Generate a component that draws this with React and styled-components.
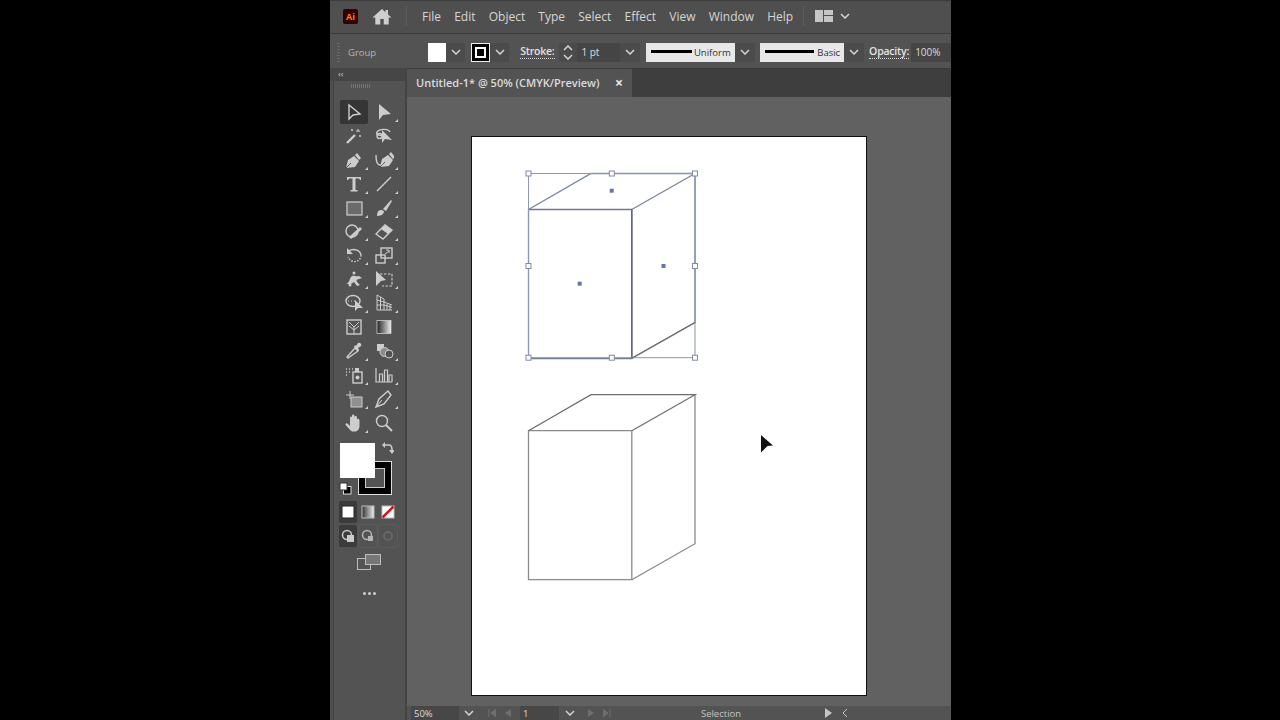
import React from 'react';
import styled, { createGlobalStyle } from 'styled-components';

const GlobalStyle = createGlobalStyle`
  html, body { margin: 0; background: #000; }
  body { font-family: 'Open Sans', 'Liberation Sans', sans-serif; }
  * { box-sizing: border-box; }
`;

const Page = styled.div`
  width: 1280px;
  height: 720px;
  background: #000;
  overflow: hidden;
`;

const Frame = styled.div`
  width: 621px;
  height: 720px;
  margin-left: 330px;
  display: flex;
  flex-direction: column;
  background: #535353;
  overflow: hidden;
`;

const MenuBar = styled.header`
  height: 34px;
  flex: none;
  display: flex;
  align-items: center;
  padding: 0 0 2px 13px;
  background: #4f4f4f;
  border-top: 1px solid #3c3c3c;
  border-bottom: 1px solid #3a3a3a;
`;

const AiLogo = styled.div`
  width: 15px;
  height: 15px;
  border-radius: 2px;
  background: #330000;
  color: #ff7c00;
  font-size: 9px;
  font-weight: 700;
  line-height: 15px;
  text-align: center;
`;

const Home = styled.div`
  margin-left: 14px;
  display: flex;
`;

const VDivider = styled.div`
  width: 1px;
  height: 20px;
  background: #5c5c5c;
  margin: 0 ${({ $right }) => $right}px 0 ${({ $left }) => $left}px;
`;

const MenuList = styled.nav`
  display: flex;
  gap: 13.2px;
`;

const MenuItem = styled.span`
  color: #d6d6d6;
  font-size: 12px;
`;

const Chevron = ({ color = '#d4d4d4' }) => (
  <svg width="10" height="6" viewBox="0 0 10 6">
    <path d="M1 1l4 4 4-4" fill="none" stroke={color} strokeWidth="1.5" />
  </svg>
);

const ControlBar = styled.div`
  height: 34px;
  flex: none;
  display: flex;
  align-items: center;
  background: #535353;
  padding: 2px 0 0 7px;
`;

const Gripper = styled.div`
  width: 3px;
  height: 19px;
  background: repeating-linear-gradient(#6a6a6a 0 1px, transparent 1px 3px);
`;

const Hint = styled.span`
  margin-left: 8px;
  width: 80px;
  color: #b4b4b4;
  font-size: 9.5px;
`;

const FillSwatch = styled.div`
  width: 19px;
  height: 19px;
  background: #fff;
`;

const StrokeSwatch = styled.div`
  width: 19px;
  height: 19px;
  margin-left: 6px;
  background: #000;
  border: 1px solid #eee;
  display: flex;
  align-items: center;
  justify-content: center;
  &::after {
    content: '';
    width: 7px;
    height: 7px;
    border: 2px solid #fff;
  }
`;

const ChevronBox = styled.div`
  width: ${({ $w }) => $w || 20}px;
  height: 19px;
  display: flex;
  align-items: center;
  justify-content: center;
  background: #4b4b4b;
`;

const DottedLabel = styled.span`
  color: #e2e2e2;
  font-size: 10.5px;
  font-weight: 600;
  line-height: 13px;
  letter-spacing: -0.2px;
  border-bottom: 1px dotted #ddd;
  margin-left: ${({ $left }) => $left}px;
`;

const Spinner = styled.div`
  width: 19px;
  height: 19px;
  margin-left: 4px;
  display: flex;
  flex-direction: column;
  align-items: center;
  justify-content: center;
  gap: 3px;
  background: #4b4b4b;
  svg:first-child { transform: scaleY(-1); }
`;

const Field = styled.div`
  width: ${({ $w }) => $w}px;
  height: 19px;
  margin-left: ${({ $left }) => $left || 0}px;
  padding-left: 4px;
  background: #454545;
  color: #dedede;
  font-size: 10px;
  line-height: 18px;
  white-space: nowrap;
  overflow: hidden;
`;

const ProfileBox = styled.div`
  width: ${({ $w }) => $w}px;
  height: 19px;
  margin-left: ${({ $left }) => $left}px;
  padding: 1px 4px 0 5px;
  background: #e8e8e8;
  display: flex;
  align-items: center;
  justify-content: space-between;
  color: #333;
  font-size: 9.5px;
  overflow: hidden;
`;

const ProfileLine = styled.i`
  display: block;
  width: ${({ $w }) => $w}px;
  height: 3px;
  margin-top: -2px;
  background: #000;
`;

const Workspace = styled.div`
  flex: 1;
  min-height: 0;
  display: flex;
`;

const Toolbar = styled.aside`
  width: 77px;
  flex: none;
  display: flex;
  flex-direction: column;
  align-items: flex-start;
  background: #535353;
  border-right: 2px solid #444;
  padding-left: 9px;
  box-shadow: inset 3px 0 0 #4f4f4f, inset 4px 0 0 #434343;
`;

const ToolbarHead = styled.div`
  height: 13px;
  margin: 0 0 0 -9px;
  width: 75px;
  flex: none;
  background: #464646;
  color: #c8c8c8;
  font-size: 9px;
  line-height: 12px;
  padding-left: 8px;
`;

const ToolGrip = styled.div`
  width: 20px;
  height: 4px;
  margin: 3px 0 12px 12px;
  flex: none;
  background: repeating-linear-gradient(90deg, #747474 0 1px, transparent 1px 2px);
`;

const ToolGrid = styled.div`
  display: grid;
  grid-template-columns: 30px 30px;
  grid-auto-rows: 23.92px;
`;

const ToolCell = styled.div`
  position: relative;
  display: flex;
  align-items: center;
  justify-content: center;
  margin: 0 1px;
  border-radius: 2px;
  background: ${({ $active }) => ($active ? '#353535' : 'transparent')};
  ${({ $flag }) =>
    $flag &&
    `&::after {
      content: '';
      position: absolute;
      right: 0;
      bottom: 2px;
      border-left: 3px solid transparent;
      border-bottom: 3px solid #cfcfcf;
    }`}
`;

const Swatches = styled.div`
  position: relative;
  width: 54px;
  height: 52px;
  margin-top: 8px;
  flex: none;
`;

const BigFill = styled.div`
  position: absolute;
  left: 1px;
  top: 0;
  width: 35px;
  height: 35px;
  background: #fff;
  z-index: 1;
`;

const BigStroke = styled.div`
  position: absolute;
  left: 19px;
  top: 18px;
  width: 34px;
  height: 34px;
  background: #000;
  border: 1px solid #ddd;
  display: flex;
  align-items: center;
  justify-content: center;
  &::after {
    content: '';
    width: 18px;
    height: 18px;
    background: #535353;
    border: 1px solid #ccc;
  }
`;

const SwatchIcon = styled.div`
  position: absolute;
  left: ${({ $x }) => $x}px;
  top: ${({ $y }) => $y}px;
  display: flex;
`;

const ModeRow = styled.div`
  display: flex;
  gap: 2px;
  margin-top: ${({ $top }) => $top}px;
  flex: none;
`;

const ModeCell = styled.div`
  width: 18px;
  height: 22px;
  display: flex;
  align-items: center;
  justify-content: center;
  border-radius: 2px;
  background: ${({ $active }) => ($active ? '#3b3b3b' : 'transparent')};
  outline: ${({ $ghost }) => ($ghost ? '1px solid #5b5b5b' : 'none')};
`;

const ScreenMode = styled.div`
  margin: 7px 0 0 18px;
  display: flex;
`;

const MoreDots = styled.div`
  margin: 22px 0 0 24px;
  display: flex;
  gap: 2px;
  i {
    width: 3px;
    height: 3px;
    border-radius: 50%;
    background: #cfcfcf;
  }
`;

const DocArea = styled.main`
  flex: 1;
  min-width: 0;
  display: flex;
  flex-direction: column;
`;

const TabBar = styled.div`
  height: 29px;
  flex: none;
  display: flex;
  background: #3e3e3e;
  border-top: 1px solid #3a3a3a;
`;

const Tab = styled.div`
  width: 225px;
  display: flex;
  align-items: center;
  justify-content: space-between;
  padding: 0 9px 2px;
  background: #535353;
  color: #dcdcdc;
  font-size: 11px;
  font-weight: 600;
`;

const TabClose = styled.span`
  color: #e8e8e8;
  font-size: 14px;
  font-weight: 700;
`;

const Canvas = styled.div`
  flex: 1;
  min-height: 0;
  background: #616161;
  padding: 39px 0 0 64px;
`;

const Artboard = styled.div`
  width: 396px;
  height: 560px;
  background: #fff;
  border: 1px solid #111;
`;

const ArtSvg = styled.svg`
  display: block;
`;

const StatusBar = styled.footer`
  height: 14px;
  flex: none;
  display: flex;
  align-items: flex-start;
  background: #535353;
  padding-left: 4px;
  color: #dcdcdc;
  font-size: 9.5px;
  line-height: 13px;
`;

const StatusField = styled.div`
  width: ${({ $w }) => $w}px;
  height: 14px;
  background: #474747;
  padding: 1px 0 0 3px;
`;

const StatusBox = styled.div`
  width: ${({ $w }) => $w}px;
  height: 14px;
  display: flex;
  align-items: center;
  justify-content: center;
  gap: ${({ $gap }) => $gap || 0}px;
`;

const StatusLabel = styled.div`
  width: 206px;
  padding-top: 1px;
  text-align: center;
  color: #c4c4c4;
`;

const stroke = { fill: 'none', stroke: '#cdcdcd', strokeWidth: 1.4 };
const solid = { fill: '#cdcdcd' };

const Nib = ({ x = 0, y = 0 }) => (
  <g transform={`translate(${x} ${y})`}>
    <path d="M2 18l2-8 6-4 5 5-4 6z" {...solid} />
    <path d="M11 5l2-2 4 5-2 2z" {...solid} />
    <path d="M2 18l5-5" stroke="#535353" strokeWidth="1" />
  </g>
);

const icons = {
  selection: <path d="M5 3v14l4-4 7-1z" {...stroke} />,
  direct: <path d="M5 2v16l4-5 8-1z" {...solid} />,
  wand: (
    <g>
      <path d="M3 17l8-8" stroke="#cdcdcd" strokeWidth="2.4" />
      <path d="M14 3v3M12 5h4M8 3v2M7 4h2M16 9v2M15 10h2" stroke="#cdcdcd" strokeWidth="1" />
    </g>
  ),
  lasso: (
    <g>
      <path d="M9 9c-6 1-7-1-6-3 2-3 11-4 13 0" {...stroke} />
      <circle cx="5.5" cy="10" r="2.5" {...stroke} />
      <path d="M8 4v13l3-4 7 1z" {...solid} />
    </g>
  ),
  pen: <Nib y="0" />,
  curvature: (
    <g>
      <g transform="translate(4 -1)"><Nib /></g>
      <path d="M2 5c0 6 1 10 4 10s3-4 4-5" {...stroke} />
    </g>
  ),
  type: <path d="M3 3h14v3h-1l-1-1.500h-3.500v11.500h2v1.500h-7v-1.500h2v-11.500h-3.500l-1 1.500h-1z" {...solid} />,
  line: <path d="M3 17L17 3" {...stroke} />,
  rect: <rect x="3" y="4" width="15" height="13" fill="#6b6b6b" stroke="#cdcdcd" strokeWidth="1.2" />,
  brush: (
    <g>
      <path d="M9 11L17 2l1 1-6 10z" {...solid} />
      <path d="M3 18c0-3 1-6 4-6 2 0 3 1 3 2-1 3-4 4-7 4z" {...solid} />
    </g>
  ),
  shaper: (
    <g>
      <circle cx="8" cy="10" r="6" {...stroke} />
      <path d="M6 17L17 7" stroke="#cdcdcd" strokeWidth="3" />
    </g>
  ),
  eraser: (
    <g>
      <path d="M2 13l9-9 7 5-9 9z" {...stroke} />
      <path d="M7 8l4-4 7 5-4 4z" {...solid} />
    </g>
  ),
  rotate: (
    <g>
      <path d="M4 7c3-4 12-3 13 3" {...stroke} />
      <path d="M17 10c0 5-5 8-9 6-2-1-3-2-4-4" fill="none" stroke="#cdcdcd" strokeWidth="1.4" strokeDasharray="1.500 1.500" />
      <path d="M3 3v6h6z" {...solid} />
    </g>
  ),
  scale: (
    <g>
      <rect x="2" y="10" width="9" height="8" {...stroke} />
      <rect x="7" y="3" width="11" height="10" {...stroke} />
      <path d="M11 9l4-3M12 5h3v3" stroke="#cdcdcd" strokeWidth="1" fill="none" />
    </g>
  ),
  width: (
    <g>
      <path d="M2 15c4-1 3-6 6-8 2-1 4 1 7 0l3 2-3 1c-2 0-3 1-2 3l3 3-3 1-3-4-3 2z" {...solid} />
      <circle cx="6" cy="16" r="1.500" {...solid} />
      <circle cx="10" cy="4" r="1.500" {...solid} />
    </g>
  ),
  freeTransform: (
    <g>
      <path d="M6 5h12v12H8" fill="none" stroke="#cdcdcd" strokeWidth="1.2" strokeDasharray="2.500 1.500" />
      <path d="M2 2v15l5-5 5-1z" {...solid} />
    </g>
  ),
  shapeBuilder: (
    <g>
      <ellipse cx="9" cy="8" rx="7" ry="5.500" {...stroke} />
      <path d="M4 8h1M7 8h1M10 8h1" stroke="#cdcdcd" strokeWidth="1.200" />
      <path d="M11 7v11l3-3 5 0z" {...solid} />
    </g>
  ),
  perspective: (
    <path
      d="M3 2v15h15M3 2l7 4v11M3 7l7 2M3 12l7 0M6.500 4v13M10 9l8 3M10 12l8 2.500M13 17v-6M16 17v-5"
      fill="none"
      stroke="#cdcdcd"
      strokeWidth="1"
    />
  ),
  mesh: (
    <g>
      <rect x="3" y="3" width="14" height="14" {...stroke} />
      <path d="M10 17V10M10 10L5 5M10 10L15 5M10 13L5 9M10 13L15 9" stroke="#cdcdcd" strokeWidth="1" fill="none" />
    </g>
  ),
  gradient: (
    <g>
      <rect x="3" y="3.500" width="14" height="13" fill="url(#toolGrad)" stroke="#cdcdcd" strokeWidth="0.800" />
    </g>
  ),
  dropper: (
    <g>
      <path d="M4 17l-1-1 8-9 3 3z" {...stroke} />
      <path d="M10 6l2 2 2 2 1-1-1-2 3-2c1-2-1-4-3-3l-2 3-1-1z" {...solid} />
    </g>
  ),
  blend: (
    <g>
      <rect x="3" y="3" width="7" height="7" {...solid} />
      <circle cx="10.500" cy="11" r="4.500" fill="#8b8b8b" stroke="#cdcdcd" />
      <circle cx="15" cy="13" r="4" fill="#535353" stroke="#cdcdcd" />
    </g>
  ),
  symbol: (
    <g>
      <rect x="9" y="7" width="9" height="11" {...stroke} />
      <rect x="11" y="3" width="4" height="4" {...solid} />
      <circle cx="13.500" cy="12.500" r="2" {...solid} />
      <path d="M2 4h1M5 4h1M8 4h1M2 7h1M5 7h1M2 10h1" stroke="#cdcdcd" strokeWidth="1.500" />
    </g>
  ),
  graph: <path d="M2 3v14h16M5.500 17V9h3v8M10.500 17V5h3v12M15 17v-7h3v7" fill="none" stroke="#cdcdcd" strokeWidth="1.200" />,
  artboard: (
    <g>
      <rect x="7" y="8" width="11" height="10" fill="#8f8f8f" stroke="#cdcdcd" />
      <path d="M6 2v8M2 6h8" stroke="#cdcdcd" strokeWidth="1" />
    </g>
  ),
  slice: (
    <g>
      <path d="M2 18l3-8 9-8 3 4-7 9z" {...stroke} />
      <path d="M2 18l6-7" stroke="#cdcdcd" strokeWidth="1" />
    </g>
  ),
  hand: (
    <path
      d="M8 18.500c-2-1-3-3-6-6-1.500-2 .5-3 2-1.500l2 2V5c0-2 2-2 2 0V3c0-2 2.500-2 2.500 0v1.500c0-2 2.500-2 2.500 0V7c0-2 2.500-1.500 2.500 .5v5.500c0 3-2 5.500-4.500 5.500z"
      {...solid}
    />
  ),
  zoom: (
    <g>
      <circle cx="8" cy="8" r="5.500" {...stroke} />
      <path d="M12 12l6 6" stroke="#cdcdcd" strokeWidth="2" />
    </g>
  ),
};

const ToolIcon = ({ name }) => (
  <svg width="20" height="20" viewBox="0 0 20 20">
    {icons[name]}
  </svg>
);

const tools = [
  ['selection', false, true],
  ['direct', true],
  ['wand'],
  ['lasso'],
  ['pen', true],
  ['curvature', true],
  ['type', true],
  ['line', true],
  ['rect', true],
  ['brush', true],
  ['shaper', true],
  ['eraser', true],
  ['rotate', true],
  ['scale', true],
  ['width', true],
  ['freeTransform', true],
  ['shapeBuilder', true],
  ['perspective', true],
  ['mesh'],
  ['gradient'],
  ['dropper', true],
  ['blend', true],
  ['symbol', true],
  ['graph', true],
  ['artboard', true],
  ['slice', true],
  ['hand', true],
  ['zoom'],
];

const menus = ['File', 'Edit', 'Object', 'Type', 'Select', 'Effect', 'View', 'Window', 'Help'];

const Handle = ({ x, y }) => (
  <rect x={x - 2.5} y={y - 2.5} width="5" height="5" fill="#fff" stroke="#7e8aa8" strokeWidth="1" />
);

const Dot = ({ x, y }) => <rect x={x - 2} y={y - 2} width="4" height="4" fill="#6a70b4" />;

const Box = ({ y, line, topLine }) => (
  <g fill="none" stroke={line} strokeWidth="1.300">
    <path d={`M528.500 ${y + 36}H631.800V${y + 185}H528.500Z`} />
    <path d={`M528.500 ${y + 36}L591 ${y}H695L631.800 ${y + 36}`} stroke={topLine} />
    <path d={`M695 ${y}V${y + 149}L631.800 ${y + 185}`} />
  </g>
);

const handles = [
  [528.5, 173.5], [611.8, 173.5], [695, 173.5],
  [528.5, 266], [695, 266],
  [528.5, 357.7], [611.8, 357.7], [695, 357.7],
];

export default function App() {
  return (
    <Page>
      <GlobalStyle />
      <Frame>
        <MenuBar>
          <AiLogo>Ai</AiLogo>
          <Home>
            <svg width="20" height="17" viewBox="0 0 20 17">
              <path d="M10 1L0.500 9.500h2.800V16.500h5V11h3.400v5.500h5V9.500h2.800l-3.500-3.100V2h-2.500v2.200z" fill="#cfcfcf" />
            </svg>
          </Home>
          <VDivider $left={14} $right={15} />
          <MenuList>
            {menus.map((m) => (
              <MenuItem key={m}>{m}</MenuItem>
            ))}
          </MenuList>
          <VDivider $left={10} $right={11} />
          <svg width="18" height="12" viewBox="0 0 18 12">
            <rect x="0" y="0" width="8" height="12" fill="#c6c6c6" />
            <rect x="9" y="0" width="9" height="5" fill="#c6c6c6" />
            <rect x="9" y="6" width="9" height="6" fill="#c6c6c6" />
          </svg>
          <span style={{ width: 7 }} />
          <Chevron />
        </MenuBar>

        <ControlBar>
          <Gripper />
          <Hint>Group</Hint>
          <FillSwatch />
          <ChevronBox $w={19}><Chevron /></ChevronBox>
          <StrokeSwatch />
          <ChevronBox $w={19}><Chevron /></ChevronBox>
          <DottedLabel $left={11}>Stroke:</DottedLabel>
          <Spinner>
            <Chevron />
            <Chevron />
          </Spinner>
          <Field $w={43}>1 pt</Field>
          <ChevronBox><Chevron /></ChevronBox>
          <ProfileBox $w={89} $left={6}>
            <ProfileLine $w={41} />
            Uniform
          </ProfileBox>
          <ChevronBox><Chevron /></ChevronBox>
          <ProfileBox $w={85} $left={5}>
            <ProfileLine $w={49} />
            Basic
          </ProfileBox>
          <ChevronBox><Chevron /></ChevronBox>
          <DottedLabel $left={5}>Opacity:</DottedLabel>
          <Field $w={40} $left={2}>100%</Field>
        </ControlBar>

        <Workspace>
          <Toolbar>
            <ToolbarHead>‹‹</ToolbarHead>
            <ToolGrip />
            <ToolGrid>
              {tools.map(([name, flag, active]) => (
                <ToolCell key={name} $flag={flag} $active={active}>
                  <ToolIcon name={name} />
                </ToolCell>
              ))}
            </ToolGrid>
            <Swatches>
              <BigFill />
              <BigStroke />
              <SwatchIcon $x={41} $y={-2}>
                <svg width="14" height="14" viewBox="0 0 14 14">
                  <path d="M3 4h6c2 0 3 2 3 5" fill="none" stroke="#cdcdcd" strokeWidth="1.500" />
                  <path d="M5 1L2 4l3 3zM9 9h6l-3 4z" fill="#cdcdcd" />
                </svg>
              </SwatchIcon>
              <SwatchIcon $x={0} $y={39}>
                <svg width="13" height="13" viewBox="0 0 13 13">
                  <rect x="4.500" y="4.500" width="7.500" height="7.500" fill="#000" stroke="#ddd" />
                  <rect x="1" y="1" width="7" height="7" fill="#fff" stroke="#333" />
                </svg>
              </SwatchIcon>
            </Swatches>
            <ModeRow $top={6}>
              <ModeCell $active>
                <svg width="14" height="14"><rect x="1" y="1" width="12" height="12" rx="1" fill="#fff" stroke="#222" /></svg>
              </ModeCell>
              <ModeCell>
                <svg width="14" height="14">
                  <defs>
                    <linearGradient id="modeGrad"><stop offset="0" stopColor="#333" /><stop offset="1" stopColor="#eee" /></linearGradient>
                  </defs>
                  <rect x="1" y="1" width="12" height="12" fill="url(#modeGrad)" stroke="#bbb" />
                </svg>
              </ModeCell>
              <ModeCell>
                <svg width="14" height="14">
                  <rect x="1" y="1" width="12" height="12" fill="#fff" stroke="#bbb" />
                  <path d="M1.500 12.500L12.500 1.500" stroke="#d4161c" strokeWidth="2.500" />
                </svg>
              </ModeCell>
            </ModeRow>
            <ModeRow $top={2}>
              <ModeCell $active>
                <svg width="14" height="14"><circle cx="6" cy="6" r="4.500" fill="none" stroke="#ccc" strokeWidth="1.500" /><rect x="6" y="6" width="7" height="7" fill="#ccc" /></svg>
              </ModeCell>
              <ModeCell $ghost>
                <svg width="14" height="14"><circle cx="6" cy="6" r="4.500" fill="none" stroke="#b5b5b5" strokeWidth="1.500" /><rect x="7" y="7" width="5" height="5" fill="#b5b5b5" /></svg>
              </ModeCell>
              <ModeCell $ghost>
                <svg width="14" height="14"><circle cx="7" cy="7" r="4" fill="none" stroke="#6c6c6c" strokeWidth="1.500" /></svg>
              </ModeCell>
            </ModeRow>
            <ScreenMode>
              <svg width="24" height="16" viewBox="0 0 24 16">
                <rect x="0.500" y="4.500" width="13" height="11" fill="none" stroke="#bdbdbd" />
                <rect x="8.500" y="0.500" width="15" height="10" fill="#777" stroke="#bdbdbd" />
              </svg>
            </ScreenMode>
            <MoreDots><i /><i /><i /></MoreDots>
          </Toolbar>

          <DocArea>
            <TabBar>
              <Tab>
                Untitled-1* @ 50% (CMYK/Preview)
                <TabClose>×</TabClose>
              </Tab>
            </TabBar>
            <Canvas>
              <Artboard>
                <ArtSvg width="394" height="558" viewBox="472 137 394 558">
                  <Box y={394.7} line="#8a8a8a" topLine="#6e6e6e" />
                  <Box y={173.5} line="#6f7a90" topLine="#78839c" />
                  <path d="M528.500 173.500H695V357.700H528.500Z" fill="none" stroke="#8c96b8" strokeWidth="1" />
                  <path d="M631.800 209.500V357.700" stroke="#5f6572" strokeWidth="1.400" />
                  <path d="M695 322.300L631.800 358" stroke="#6a6a6a" strokeWidth="1" />
                  {handles.map(([x, y]) => (
                    <Handle key={`${x}-${y}`} x={x} y={y} />
                  ))}
                  <Dot x={611.7} y={190.7} />
                  <Dot x={579.7} y={283.7} />
                  <Dot x={663.5} y={266} />
                  <path d="M761 435l12 10.500-5.500 .5-6.500 6.500z" fill="#111" />
                </ArtSvg>
              </Artboard>
            </Canvas>
            <StatusBar>
              <StatusField $w={48}>50%</StatusField>
              <StatusBox $w={19}><Chevron /></StatusBox>
              <StatusBox $w={42} $gap={9}>
                <svg width="8" height="8"><path d="M1 0v8M8 0v8L3 4z" stroke="#6f6f6f" fill="#6f6f6f" /></svg>
                <svg width="6" height="8"><path d="M6 0v8L0 4z" fill="#6f6f6f" /></svg>
              </StatusBox>
              <StatusField $w={39}>1</StatusField>
              <StatusBox $w={21}><Chevron /></StatusBox>
              <StatusBox $w={38} $gap={9}>
                <svg width="6" height="8"><path d="M0 0v8l6-4z" fill="#6f6f6f" /></svg>
                <svg width="8" height="8"><path d="M7 0v8M0 0v8l5-4z" stroke="#6f6f6f" fill="#6f6f6f" /></svg>
              </StatusBox>
              <StatusLabel>Selection</StatusLabel>
              <StatusBox $w={9}>
                <svg width="7" height="10"><path d="M0 0v10l7-5z" fill="#c4c4c4" /></svg>
              </StatusBox>
              <StatusBox $w={24}>
                <svg width="6" height="10"><path d="M5 1L1 5l4 4" fill="none" stroke="#c4c4c4" /></svg>
              </StatusBox>
            </StatusBar>
          </DocArea>
        </Workspace>
      </Frame>
      <svg width="0" height="0" style={{ position: 'absolute' }}>
        <defs>
          <linearGradient id="toolGrad">
            <stop offset="0" stopColor="#222" />
            <stop offset="1" stopColor="#eee" />
          </linearGradient>
        </defs>
      </svg>
    </Page>
  );
}
